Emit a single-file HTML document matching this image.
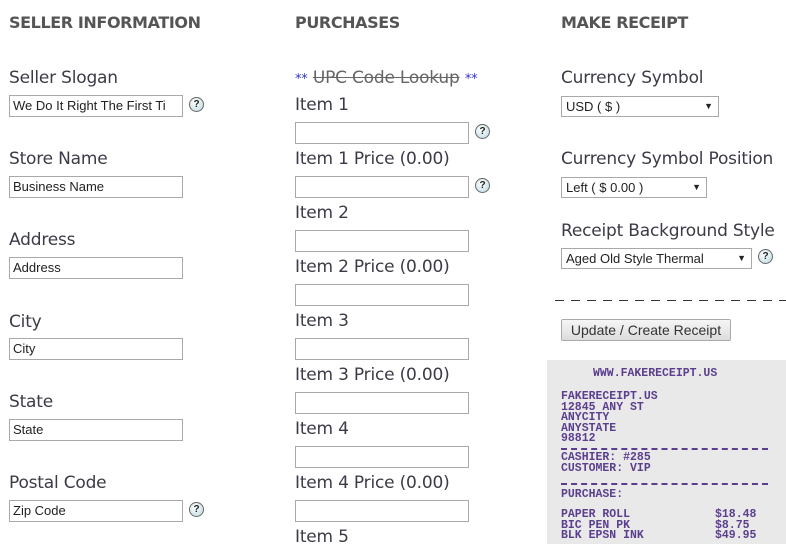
<!DOCTYPE html>
<html><head><meta charset="utf-8"><style>
body{margin:0;width:786px;height:544px;overflow:hidden;background:#fff;position:relative;font-family:"DejaVu Sans","Liberation Sans",sans-serif;color:#3b3b48}
.a{position:absolute;white-space:nowrap}
.h{font-weight:bold;font-size:16px;color:#555;letter-spacing:-0.4px}
.l{font-size:17px;line-height:20px;letter-spacing:-0.2px}
.i{position:absolute;border:1px solid #a9a9a9;background:#fff;font:13px "Liberation Sans",sans-serif;color:#222;line-height:20px;padding-left:3px;box-sizing:border-box;height:22px;overflow:hidden}
.s{position:absolute;height:21px;border:1px solid #a9a9a9;background:#fff;font:13px "Liberation Sans",sans-serif;color:#222;line-height:19px;padding-left:4px;box-sizing:border-box}
.s:after{content:"▼";position:absolute;right:5px;top:0;font-size:9px}
.q{position:absolute;width:13px;height:13px;border-radius:50%;border:1px solid #666;background:radial-gradient(circle at 40% 35%,#fff,#b8d8e0);font:bold 10px "Liberation Sans",sans-serif;text-align:center;line-height:13px;color:#222;box-sizing:content-box}
.r{position:absolute;left:547px;top:360px;width:239px;height:184px;background:#e9e9e9}
.r div{position:absolute;font:bold 11.5px "Liberation Mono",monospace;color:#5b3f8e;white-space:pre;line-height:10.5px}
.r .d{width:207px;height:0;border-top:2px dashed #5b3f8e}
.btn{position:absolute;left:561px;top:319px;width:170px;height:22px;border:1px solid #aaa;border-radius:2px;background:linear-gradient(#f6f6f6,#dcdcdc);font:14px "Liberation Sans",sans-serif;color:#333;text-align:center;line-height:20px;box-sizing:border-box}
</style></head><body>
<div class="a h" style="left:9px;top:13px">SELLER INFORMATION</div>
<div class="a h" style="left:295px;top:13px">PURCHASES</div>
<div class="a h" style="left:561px;top:13px">MAKE RECEIPT</div>

<div class="a l" style="left:9px;top:68px">Seller Slogan</div>
<div class="i" style="left:9px;top:95px;width:174px">We Do It Right The First Ti</div><div class="q" style="left:189px;top:97px">?</div>
<div class="a l" style="left:9px;top:149px">Store Name</div>
<div class="i" style="left:9px;top:176px;width:174px">Business Name</div>
<div class="a l" style="left:9px;top:230px">Address</div>
<div class="i" style="left:9px;top:257px;width:174px">Address</div>
<div class="a l" style="left:9px;top:312px">City</div>
<div class="i" style="left:9px;top:338px;width:174px">City</div>
<div class="a l" style="left:9px;top:392px">State</div>
<div class="i" style="left:9px;top:419px;width:174px">State</div>
<div class="a l" style="left:9px;top:473px">Postal Code</div>
<div class="i" style="left:9px;top:500px;width:174px">Zip Code</div><div class="q" style="left:189px;top:502px">?</div>

<div class="a l" style="left:295px;top:68px"><span style="color:#33c;font-size:13px">**</span> <s style="color:#666">UPC Code Lookup</s> <span style="color:#33c;font-size:13px">**</span></div>
<div class="a l" style="left:295px;top:95px">Item 1</div>
<div class="i" style="left:295px;top:122px;width:174px"></div><div class="q" style="left:475px;top:124px">?</div>
<div class="a l" style="left:295px;top:149px">Item 1 Price (0.00)</div>
<div class="i" style="left:295px;top:176px;width:174px"></div><div class="q" style="left:475px;top:178px">?</div>
<div class="a l" style="left:295px;top:203px">Item 2</div>
<div class="i" style="left:295px;top:230px;width:174px"></div>
<div class="a l" style="left:295px;top:257px">Item 2 Price (0.00)</div>
<div class="i" style="left:295px;top:284px;width:174px"></div>
<div class="a l" style="left:295px;top:311px">Item 3</div>
<div class="i" style="left:295px;top:338px;width:174px"></div>
<div class="a l" style="left:295px;top:365px">Item 3 Price (0.00)</div>
<div class="i" style="left:295px;top:392px;width:174px"></div>
<div class="a l" style="left:295px;top:419px">Item 4</div>
<div class="i" style="left:295px;top:446px;width:174px"></div>
<div class="a l" style="left:295px;top:473px">Item 4 Price (0.00)</div>
<div class="i" style="left:295px;top:500px;width:174px"></div>
<div class="a l" style="left:295px;top:527px">Item 5</div>

<div class="a l" style="left:561px;top:68px">Currency Symbol</div>
<div class="s" style="left:561px;top:96px;width:158px">USD ( $ )</div>
<div class="a l" style="left:561px;top:149px">Currency Symbol Position</div>
<div class="s" style="left:561px;top:177px;width:146px">Left ( $ 0.00 )</div>
<div class="a l" style="left:561px;top:221px">Receipt Background Style</div>
<div class="s" style="left:561px;top:248px;width:191px">Aged Old Style Thermal</div><div class="q" style="left:758px;top:249px">?</div>
<div style="position:absolute;left:555px;top:300px;width:231px;height:1px;background:repeating-linear-gradient(90deg,#333 0 9px,transparent 9px 16px)"></div>
<div class="btn">Update / Create Receipt</div>

<div class="r">
<div style="left:46px;top:9px">WWW.FAKERECEIPT.US</div>
<div style="left:14px;top:32px">FAKERECEIPT.US
12845 ANY ST
ANYCITY
ANYSTATE
98812</div>
<div class="d" style="left:14px;top:88px"></div>
<div style="left:14px;top:93px">CASHIER: #285
CUSTOMER: VIP</div>
<div class="d" style="left:14px;top:123px"></div>
<div style="left:14px;top:130px">PURCHASE:</div>
<div style="left:14px;top:150px">PAPER ROLL
BIC PEN PK
BLK EPSN INK</div>
<div style="left:168px;top:150px">$18.48
$8.75
$49.95</div>
</div>
</body></html>
